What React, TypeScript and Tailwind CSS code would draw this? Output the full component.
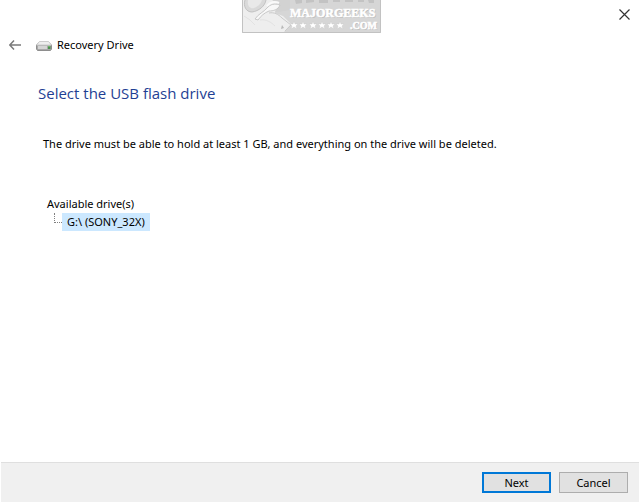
import type { ReactNode } from 'react';

interface Drive {
    letter: string;
    label: string;
}

const drives: Drive[] = [{ letter: 'G:\\', label: 'SONY_32X' }];

const starXs = [52, 61, 71, 80, 89, 98];

function Watermark() {
    return (
        <svg className="absolute top-0 left-[242px]" width="139" height="33" viewBox="0 0 139 33" aria-label="MajorGeeks.com">
            <rect x="0" y="-1" width="139" height="34" fill="#d6d6d6" />
            {/* Blocks along the top edge */}
            <path d="M53 0H60V3L54 4ZM64 0H72V2L64 3ZM77 0H86V3H77ZM91 0H98V2H91ZM103 0H111V2H103ZM116 0H122V2H116ZM126 0H132V3H127Z" fill="#c3c3c3" />
            {/* Figure */}
            <path d="M0 0H31L35 4L33 13L41 16L49 24L42 32H0Z" fill="#eeeeee" />
            <path d="M3 0C1 6 4 12 10 12C17 11 23 6 24 0" fill="#d9d9d9" stroke="#c2c2c2" />
            <path d="M6 0C5 6 8 9 12 8C17 6 19 3 20 0" fill="#e9e9e9" />
            <path d="M30 0H48V10C42 11 37 12 33 12L37 5Z" fill="#d2d2d2" />
            <path d="M13 19C16 14 22 12 26 7C30 3 35 4 38 5C36 10 31 11 27 11C22 13 19 16 16 20Z" fill="#f8f8f8" stroke="#c8c8c8" />
            <path d="M25 6C28 2 33 1 37 3" fill="none" stroke="#fafafa" strokeWidth="2" />
            <path d="M27 13C32 12 36 14 40 18L49 25L43 31" fill="none" stroke="#cacaca" />
            <path d="M2 16L8 20L13 25M18 20C24 19 29 22 33 26" fill="none" stroke="#e2e2e2" />
            <path d="M40 25L42 28L39 29Z" fill="#b8b8b8" />
            <g fill="#bebebe" transform="translate(1 1)" fontFamily="'Liberation Serif', serif" fontWeight="700">
                <text x="48" y="17" fontSize="12">MAJORGEEKS</text>
                <text x="108" y="29" fontSize="10">.COM</text>
            </g>
            <g fill="#ffffff" stroke="#ffffff" strokeWidth="0.5" fontFamily="'Liberation Serif', serif" fontWeight="700">
                <text x="48" y="17" fontSize="12">MAJORGEEKS</text>
                <text x="108" y="29" fontSize="10">.COM</text>
            </g>
            {starXs.map((x) => (
                <path
                    key={x}
                    transform={`translate(${x} 25)`}
                    d="M0 -4L1 -1H4L2 1L3 4L0 2L-3 4L-2 1L-4 -1H-1Z"
                    fill="#ffffff"
                    stroke="#c8c8c8"
                    strokeWidth="0.4"
                />
            ))}
            <path d="M0.5 0V32.5H138.5V0" fill="none" stroke="#c2c2c2" />
        </svg>
    );
}

function DriveIcon() {
    return (
        <svg width="16" height="12" viewBox="0 0 16 12" aria-hidden="true">
            <path d="M3.5 3H12.5L15.5 6V10L14.5 11.5H1.5L0.5 10V6Z" fill="#a8a8a8" stroke="#8e8e8e" />
            <path d="M3.5 2.5H12.5L15.5 6H0.5Z" fill="#eeeeee" stroke="#cccccc" />
            <path d="M2 7H11V10H2Z" fill="#d4d4d4" />
            <path d="M12 7H14.5V10H12Z" fill="#4b8f4f" />
            <path d="M12.5 7H13.5V8H12.5Z" fill="#8ee07c" />
        </svg>
    );
}

function DialogButton({ children, primary = false }: { children: ReactNode; primary?: boolean }) {
    return (
        <button
            type="button"
            className={`h-[21px] w-[69px] bg-[#e1e1e1] leading-4 ${
                primary ? 'border-2 border-[#0078d7]' : 'border border-[#adadad]'
            }`}
        >
            {children}
        </button>
    );
}

export default function App() {
    return (
        <div className="relative flex min-h-screen flex-col bg-white px-px pb-px font-['Noto_Sans','Open_Sans',sans-serif] text-[11px] leading-4 text-black">
            <Watermark />

            <div className="flex h-[29px] justify-end pr-[5px]">
                <button type="button" aria-label="Close" className="px-1">
                    <svg width="11" height="11" viewBox="0 0 11 11">
                        <path d="M0.5 0.5L10.5 10.5M10.5 0.5L0.5 10.5" stroke="#333333" strokeWidth="1.2" />
                    </svg>
                </button>
            </div>

            <header className="flex h-8 items-center pl-2">
                <button type="button" aria-label="Back" className="mr-[15px]">
                    <svg width="12" height="10" viewBox="0 0 12 10">
                        <path d="M12 5H1M5 0.5L0.8 5L5 9.5" fill="none" stroke="#7a7a7a" strokeWidth="1.5" />
                    </svg>
                </button>
                <DriveIcon />
                <h1 className="ml-[5px]">Recovery Drive</h1>
            </header>

            <main className="flex-1 pt-[22px] pl-[37px]">
                <h2 className="font-['Open_Sans','Noto_Sans',sans-serif] text-[15px] leading-5 text-[#1f3f94]">
                    Select the USB flash drive
                </h2>
                <p className="mt-[33px] pl-[5px]">
                    The drive must be able to hold at least 1 GB, and everything on the drive will be deleted.
                </p>
                <div className="mt-11 pl-[9px]">
                    <p id="drives-label">Available drive(s)</p>
                    <ul role="listbox" aria-labelledby="drives-label" className="mt-px pl-[7px]">
                        {drives.map((drive) => (
                            <li key={drive.letter} role="option" aria-selected="true" className="flex">
                                <span className="h-[10px] w-2 border-b border-l border-dotted border-[#808080]" />
                                <span className="bg-[#cce8ff] px-[5px] leading-[18px]">
                                    {drive.letter} ({drive.label})
                                </span>
                            </li>
                        ))}
                    </ul>
                </div>
            </main>

            <footer className="flex h-10 items-center justify-end gap-2 border-t border-[#dfdfdf] bg-[#f0f0f0] pr-[11px]">
                <DialogButton primary>Next</DialogButton>
                <DialogButton>Cancel</DialogButton>
            </footer>
        </div>
    );
}
